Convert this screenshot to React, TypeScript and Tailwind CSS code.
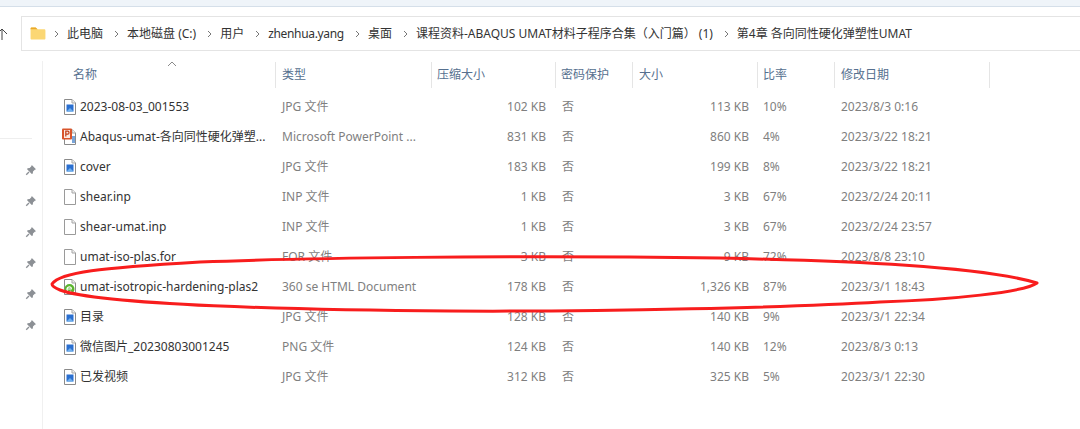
import React from "react";

const FONT = "font-['Noto_Sans','Noto_Sans_CJK_SC',sans-serif]";

type Kind = "img" | "ppt" | "blank" | "html";
const rows: { icon: Kind; name: string; type: string; comp: string; size: string; ratio: string; date: string }[] = [
  { icon: "img", name: "2023-08-03_001553", type: "JPG 文件", comp: "102 KB", size: "113 KB", ratio: "10%", date: "2023/8/3 0:16" },
  { icon: "ppt", name: "Abaqus-umat-各向同性硬化弹塑...", type: "Microsoft PowerPoint ...", comp: "831 KB", size: "860 KB", ratio: "4%", date: "2023/3/22 18:21" },
  { icon: "img", name: "cover", type: "JPG 文件", comp: "183 KB", size: "199 KB", ratio: "8%", date: "2023/3/22 18:21" },
  { icon: "blank", name: "shear.inp", type: "INP 文件", comp: "1 KB", size: "3 KB", ratio: "67%", date: "2023/2/24 20:11" },
  { icon: "blank", name: "shear-umat.inp", type: "INP 文件", comp: "1 KB", size: "3 KB", ratio: "67%", date: "2023/2/24 23:57" },
  { icon: "blank", name: "umat-iso-plas.for", type: "FOR 文件", comp: "3 KB", size: "9 KB", ratio: "72%", date: "2023/8/8 23:10" },
  { icon: "html", name: "umat-isotropic-hardening-plas2", type: "360 se HTML Document", comp: "178 KB", size: "1,326 KB", ratio: "87%", date: "2023/3/1 18:43" },
  { icon: "img", name: "目录", type: "JPG 文件", comp: "128 KB", size: "140 KB", ratio: "9%", date: "2023/3/1 22:34" },
  { icon: "img", name: "微信图片_20230803001245", type: "PNG 文件", comp: "124 KB", size: "140 KB", ratio: "12%", date: "2023/8/3 0:13" },
  { icon: "img", name: "已发视频", type: "JPG 文件", comp: "312 KB", size: "325 KB", ratio: "5%", date: "2023/3/1 22:30" },
];

const crumbs = [
  { t: "此电脑", c: "mr-[10px]" },
  { t: "本地磁盘 (C:)", c: "mr-[10px]" },
  { t: "用户", c: "mr-[10px]" },
  { t: "zhenhua.yang", c: "mr-[10px] tracking-[-0.33px]" },
  { t: "桌面", c: "mr-[10px]" },
  { t: "课程资料-ABAQUS UMAT材料子程序合集（入门篇） (1)", c: "mr-[10px]" },
  { t: "第4章 各向同性硬化弹塑性UMAT", c: "mr-[10px]" },
];

const headers = [
  { t: "名称", w: "w-[233px]", pl: "pl-[30px]" },
  { t: "类型", w: "w-[156px]", pl: "pl-[6px]" },
  { t: "压缩大小", w: "w-[124px]", pl: "pl-[5px]" },
  { t: "密码保护", w: "w-[77px]", pl: "pl-[5px]" },
  { t: "大小", w: "w-[125px]", pl: "pl-[6px]" },
  { t: "比率", w: "w-[77px]", pl: "pl-[5px]" },
  { t: "修改日期", w: "w-[155px]", pl: "pl-[6px]" },
];

function FileIcon({ kind }: { kind: Kind }) {
  return (
    <svg width="16" height="18" viewBox="0 0 16 18" className="shrink-0">
      <path d="M2.5 1.5H10L13.5 5V16.5H2.5Z" fill="#fff" stroke={kind === "blank" ? "#9a9a9a" : "#8a8a8a"} strokeWidth="1" />
      <path d="M10 1.5V5H13.5" fill="#f0f0f0" stroke="#a5a5a5" strokeWidth="1" />
      {kind === "img" && <rect x="4.5" y="6.5" width="7" height="7" fill="#2a6fd0" />}
      {kind === "img" && <path d="M4.5 13.5L8 10L11.5 13.5Z" fill="#6fb0ec" />}
      {kind === "ppt" && (
        <>
          <rect x="0" y="0.5" width="10" height="11" rx="1" fill="#d9552b" />
          <rect x="2" y="2" width="6" height="8" fill="#fbe9e2" />
          <path d="M3.8 8.6V3.2H5.8C7.4 3.2 7.4 6.2 5.8 6.2H3.8" fill="none" stroke="#c23c17" strokeWidth="1.2" />
          <rect x="10" y="8" width="3" height="7" fill="#7aa5d8" />
        </>
      )}
      {kind === "html" && (
        <>
          <circle cx="7.5" cy="11" r="5" fill="#5bb52f" />
          <path d="M5.2 11H9.8M9.6 10.6A2.4 2.4 0 1 0 9.2 12.8" fill="none" stroke="#fff" strokeWidth="1.1" />
        </>
      )}
    </svg>
  );
}

function Pin() {
  return (
    <svg width="12" height="12" viewBox="0 0 12 12">
      <path d="M6.8 1L11 5.2L9.8 5.8L8 7.4L7.8 9.6L6.8 10L2.1 5.2L2.5 4.2L4.7 4L6.3 2.2Z" fill="#8c9095" />
      <path d="M4 8L1.2 10.8" stroke="#8c9095" strokeWidth="1.3" />
    </svg>
  );
}

export default function App() {
  return (
    <div className={`${FONT} w-[1080px] h-[429px] bg-white overflow-hidden relative flex flex-col`}>
      <div className="h-[7px] bg-[#eff4f9] border-b border-[#d5dfe9] shrink-0" />
      <div className="flex items-center h-[35px] mt-[9px] shrink-0">
        <svg width="21" height="12" viewBox="0 0 21 12" className="shrink-0">
          <path d="M-3 6L2 1L7 6M2 1V12" fill="none" stroke="#444" strokeWidth="1" />
        </svg>
        <div className="flex-1 h-[35px] border-y border-l border-[#e4e4e4] flex items-center pl-[8px]">
          <svg width="16" height="13" viewBox="0 0 17 14" className="shrink-0">
            <path d="M0.5 2C0.5 1 1 0.5 2 0.5H6L8 2.5H15C16 2.5 16.5 3 16.5 4V12.5C16.5 13.2 16 13.5 15.4 13.5H1.6C1 13.5 0.5 13.2 0.5 12.5Z" fill="#fbd774" />
            <path d="M0.5 2C0.5 1 1 0.5 2 0.5H6L8 2.5H0.5Z" fill="#eaa92a" />
          </svg>
          <div className="flex items-center text-[12px] text-[#333] whitespace-nowrap ml-[7px]">
            {crumbs.map((c) => (
              <React.Fragment key={c.t}>
                <svg width="5" height="8" viewBox="0 0 5 8" className="ml-[1px] mr-[8px] shrink-0">
                  <path d="M1 1L4 4L1 7" fill="none" stroke="#777" strokeWidth="1" />
                </svg>
                <span className={c.c}>{c.t}</span>
              </React.Fragment>
            ))}
          </div>
        </div>
      </div>

      <div className="flex flex-1 mt-[10px] min-h-0">
        <div className="w-[43px] shrink-0 border-r border-[#f0f0f0] flex flex-col items-start">
          <div className="w-[32px] border-t border-[#eeeeee] mt-[77px]" />
          <div className="flex flex-col gap-[19px] mt-[25px] ml-[25px]">
            <Pin />
            <Pin />
            <Pin />
            <Pin />
            <Pin />
            <Pin />
          </div>
        </div>

        <div className="flex-1 min-w-0 relative">
          <div className="flex h-[26px] mt-[1px]">
            {headers.map((h) => (
              <div key={h.t} className={`${h.w} ${h.pl} shrink-0 border-r border-[#e5e5e5] text-[12px] text-[#56708f] flex items-center`}>
                {h.t}
              </div>
            ))}
          </div>
          <svg width="10" height="6" viewBox="0 0 10 6" className="absolute left-[124px] top-0">
            <path d="M1 5L5 1L9 5" fill="none" stroke="#8a8a8a" strokeWidth="1" />
          </svg>
          <div className="flex flex-col mt-[4px]">
            {rows.map((r) => (
              <div key={r.name} className="flex h-[30px] items-center text-[12px] text-[#7f7f7f] whitespace-nowrap">
                <div className="w-[233px] pl-[19px] flex items-center gap-[2px] text-[#333] shrink-0">
                  <FileIcon kind={r.icon} />
                  <span>{r.name}</span>
                </div>
                <div className="w-[156px] pl-[6px] shrink-0">{r.type}</div>
                <div className="w-[124px] pr-[10px] text-right shrink-0">{r.comp}</div>
                <div className="w-[77px] pl-[6px] shrink-0">否</div>
                <div className="w-[125px] pr-[9px] text-right shrink-0">{r.size}</div>
                <div className="w-[77px] pl-[5px] shrink-0">{r.ratio}</div>
                <div className="w-[155px] pl-[6px] shrink-0">{r.date}</div>
              </div>
            ))}
          </div>
        </div>
      </div>

      <svg width="1080" height="429" viewBox="0 0 1080 429" className="absolute left-0 top-0 pointer-events-none">
        <path
          d="M52 284C60 272 100 268 200 262C300 258 500 255 720 258C850 261 980 266 1037 283C1025 292 950 300 880 302C800 307 600 312 450 311C300 310 100 305 60 290C55 288 52 286 52 284Z"
          fill="none"
          stroke="#f81d1d"
          strokeWidth="3"
          strokeLinejoin="round"
        />
      </svg>
    </div>
  );
}
